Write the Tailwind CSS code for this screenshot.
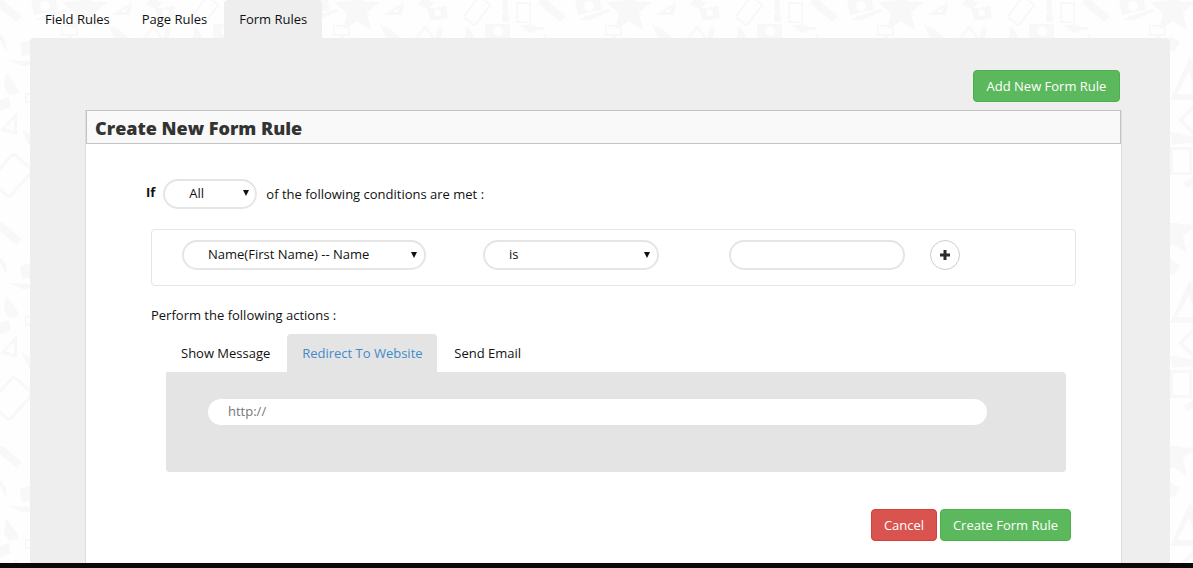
<!DOCTYPE html>
<html>
<head>
<meta charset="utf-8">
<script src="https://cdn.jsdelivr.net/npm/@tailwindcss/browser@4"></script>
</head>
<body class="bg-white font-['Open_Sans',sans-serif] text-[13px] text-[#111]">
<div class="relative h-[568px] w-[1193px] overflow-hidden bg-[#fefefe]">
  <!-- faint doodle wallpaper: one 272x223 tile repeated -->
  <svg class="absolute inset-0" width="1193" height="568">
    <defs>
      <pattern id="doodle" x="0" y="0" width="272" height="223" patternUnits="userSpaceOnUse">
        <g fill="#f8f8f8" stroke="none" fill-rule="evenodd">
          <path d="M85-14l6 15 17 1-13 11 4 17-14-9-14 9 4-17-13-11 17-1z"/>
          <path d="M111 15L132 2l-2 13zM120 12l7-4-1 4z"/>
          <path d="M151-3l11 6-5 7-11-6z"/>
          <path d="M156 9l18-3 2 12-18 3zM165 9a3.500 3.500 0 1 0 1 7a3.500 3.500 0 1 0-1-7z"/>
          <path d="M231 0h4l1 9-1 4h2v9h-7v-9h2l-2-5z"/>
          <path d="M31 1l24-5 3 14-24 5zM44 1a5 5 0 1 0 2 10a5 5 0 1 0-2-10z"/>
          <path d="M36 20l6-4 24-7v2l-20 9z"/>
          <path d="M61 25h17v11h-6v2h-5v-2h-6zM63 27v7h13v-7z"/>
          <path d="M108 24l12 6 8 8h-14z"/>
          <path d="M143 38l10-13 10 13h-3l-7-9-7 9z"/>
          <path d="M163 38l3-10 2-2 3 3-2 9z"/>
          <path d="M193 38l2-13 8 13z"/>
          <path d="M213 24h25v15h-25zM226 26a5 5 0 1 0 .1 0z"/>
          <path d="M248 26l10-2 8 3 17 1v1l-17 1-8 3z"/>
          <path d="M-2 35l6 13 3 3-1-8-4-8z"/>
          <path d="M20 43l10-3v15l-8 1z"/>
          <path d="M0 58l10 2 10 1 6-1 6 3-4 3h-6l-8-4z"/>
          <path d="M6 73l10 12 3 8-10 2-5-8z"/>
          <path d="M-2 100l11-3 2 10-13 5zM25 93h7v10h-7zM27 95v6h5v-6z"/>
          <path d="M0 130l17-18v23zM5 128l9-9v12z"/>
          <path d="M22 130l8 4v12l-4-6z"/>
          <path d="M82 36l10 6-6 10-4-2zM102 56l16 44h-36zM101 72l-12 22h20z"/>
          <path d="M90 120l15-15 15 15-15 15zM95 120l10 10 10-10-10-10z"/>
          <path d="M82 132l6 1 22 5 2 4-28 3zM82 147h22v28H82zM85 150v22h16v-22z"/>
          <path d="M96 182l18-8 2 6-18 8z"/>
        </g>
        <g fill="none" stroke="#f8f8f8">
          <rect x="198" y="-2" width="14" height="26" rx="2" stroke-width="2" transform="rotate(38 205 11)"/>
          <rect x="245" y="3" width="13" height="19" stroke-width="2"/>
          <path d="M269 0l22 19" stroke-width="8"/>
          <path d="M-3 0l22 19" stroke-width="8"/>
          <rect x="-2" y="158" width="26" height="36" rx="3" stroke-width="3" transform="rotate(42 12 176)"/>
        </g>
      </pattern>
    </defs>
    <rect width="1193" height="568" fill="url(#doodle)"/>
  </svg>

  <div class="relative flex h-[38px] pl-[30px]">
    <a class="flex items-center px-[15px] pt-[1px] text-[13px]">Field Rules</a>
    <a class="ml-[2px] flex items-center px-[15px] pt-[1px] text-[13px]">Page Rules</a>
    <a class="ml-[2px] flex items-center rounded-t-[4px] bg-[#eeeeee] px-[15px] pt-[1px] text-[13px]">Form Rules</a>
  </div>

  <main class="relative ml-[30px] h-[530px] w-[1140px] rounded-[4px] bg-[#eeeeee] pl-[55px] pr-[48px] pt-[32px]">
    <div class="flex justify-end pr-[2px]">
      <button class="h-[32px] w-[147px] rounded-[4px] border border-[#4cae4c] bg-[#5cb85c] pt-[1px] text-[13px] text-white">Add New Form Rule</button>
    </div>
    <section class="mt-[8px] h-[500px] border-r border-l border-[#dddddd] bg-white">
      <h2 class="flex h-[34px] items-center border border-[#c4c4c4] bg-[#f9f9f9] pl-[8px] pt-[2px] text-[18px] font-extrabold text-[#333333]">Create New Form Rule</h2>

      <div class="mt-[35px] flex h-[30px] items-center pl-[60px]">
        <b class="mr-[8px] -translate-y-[1px] text-[13px] font-bold">If</b>
        <div class="relative flex h-[30px] w-[94px] items-center rounded-full border-2 border-[#e5e5e5] pl-[24px]">All
          <svg class="absolute right-[6px] top-[9px]" width="6" height="6"><path d="M0 0h6L3 6z" fill="#111"/></svg>
        </div>
        <span class="ml-[9px] pt-[1px]">of the following conditions are met :</span>
      </div>

      <div class="ml-[65px] mt-[20px] flex h-[57px] w-[925px] items-center rounded-[4px] border border-[#e5e5e5] pb-[6px] pl-[30px]">
        <div class="relative flex h-[30px] w-[244px] items-center rounded-full border-2 border-[#e5e5e5] pl-[24px]">Name(First Name) -- Name
          <svg class="absolute right-[7px] top-[10px]" width="6" height="6"><path d="M0 0h6L3 6z" fill="#111"/></svg>
        </div>
        <div class="relative ml-[57px] flex h-[30px] w-[176px] items-center rounded-full border-2 border-[#e5e5e5] pl-[24px]">is
          <svg class="absolute right-[7px] top-[10px]" width="6" height="6"><path d="M0 0h6L3 6z" fill="#111"/></svg>
        </div>
        <div class="ml-[70px] h-[30px] w-[176px] rounded-full border-2 border-[#e5e5e5]"></div>
        <div class="ml-[25px] flex h-[30px] w-[30px] items-center justify-center rounded-full border border-[#cccccc]">
          <svg width="10" height="10"><path d="M0 5h10M5 0v10" stroke="#2b2b2b" stroke-width="3"/></svg>
        </div>
      </div>

      <p class="ml-[65px] mt-[20px] leading-[18px]">Perform the following actions :</p>

      <div class="ml-[80px] mt-[10px] flex h-[38px] w-[900px]">
        <a class="flex items-center px-[15px] pt-[1px]">Show Message</a>
        <a class="ml-[2px] flex w-[150px] items-center justify-center rounded-t-[4px] bg-[#e4e4e4] pt-[1px] text-[#428bca]">Redirect To Website</a>
        <a class="ml-[2px] flex items-center px-[15px] pt-[1px]">Send Email</a>
      </div>
      <div class="ml-[80px] h-[100px] w-[900px] rounded-b-[4px] rounded-tr-[4px] bg-[#e4e4e4] pl-[42px] pt-[27px]">
        <div class="flex h-[26px] w-[779px] items-center rounded-full bg-white pl-[20px] text-[#777777]">http://</div>
      </div>

      <div class="mt-[37px] flex justify-end gap-[3px] pr-[50px]">
        <button class="h-[32px] w-[66px] rounded-[4px] border border-[#d43f3a] bg-[#d9534f] pt-[1px] text-[13px] text-white">Cancel</button>
        <button class="h-[32px] w-[131px] rounded-[4px] border border-[#4cae4c] bg-[#5cb85c] pt-[1px] text-[13px] text-white">Create Form Rule</button>
      </div>
    </section>
  </main>
  <div class="absolute bottom-0 left-0 h-[5px] w-full bg-[#0a0a0a]"></div>
</div>
</body>
</html>
